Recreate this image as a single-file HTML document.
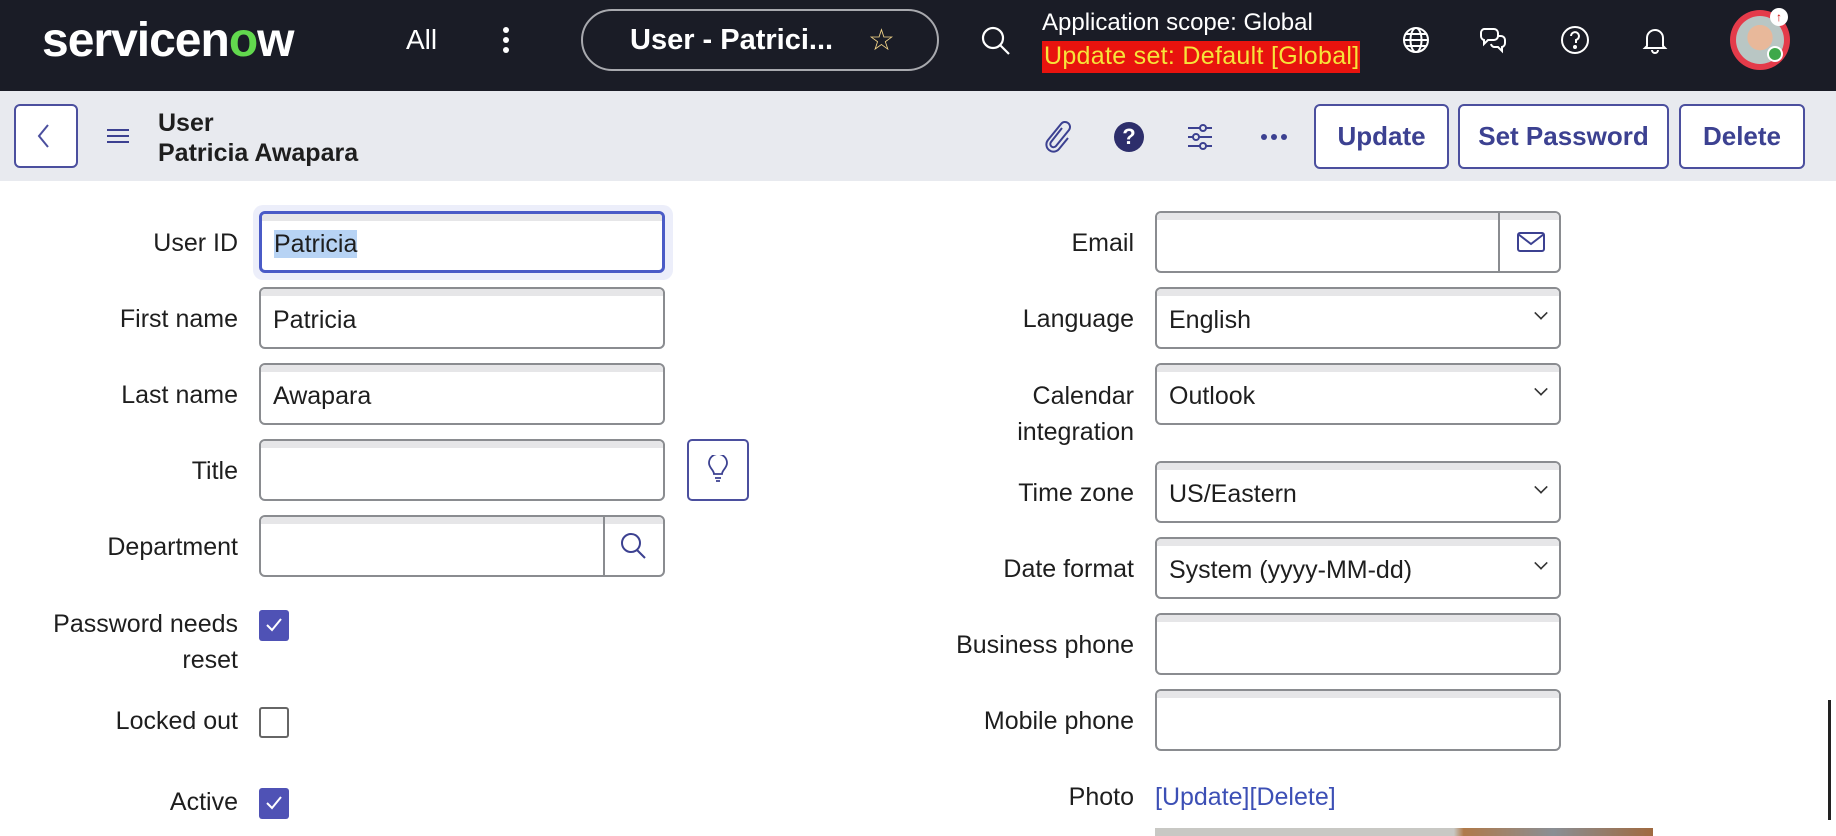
<!DOCTYPE html>
<html><head><meta charset="utf-8"><style>
*{box-sizing:border-box;margin:0;padding:0}
body{width:1836px;height:836px;overflow:hidden;background:#fff;font-family:"Liberation Sans",sans-serif;position:relative;color:#1e1e1e}
.a{position:absolute}
.top{left:0;top:0;width:1836px;height:91px;background:#1a1c26}
.bar2{left:0;top:91px;width:1836px;height:90px;background:#e8eaef}
.lbl{position:absolute;font-size:25px;text-align:right;white-space:nowrap;line-height:35px}
.inp{position:absolute;height:62px;border:2px solid #8a8c90;border-radius:6px;background:#fff;overflow:hidden;font-size:25px;line-height:62px;padding-left:12px}
.inp:before{content:"";position:absolute;left:0;right:0;top:0;height:7px;background:#e6e6e8}
.inp span{position:relative}
.chev{position:absolute;right:12px;top:18px;width:12px;height:12px;border-right:2px solid #333;border-bottom:2px solid #333;transform:rotate(45deg) scale(.8)}
.btn{position:absolute;top:104px;height:65px;border:2px solid #4b4f9e;border-radius:6px;background:#fff;color:#3c4191;font-weight:bold;font-size:26px;text-align:center;line-height:61px}
.cb{position:absolute;width:30px;height:31px;border-radius:3px}
.cb.on{background:#4f52b5}
.cb.off{border:2px solid #666;background:#fff}
</style></head><body>
<div class="a top"></div>
<div class="a" style="left:42px;top:13px;color:#fff;font-size:48px;font-weight:bold;letter-spacing:-1px">servicen<span style="color:#62d84e">o</span>w</div>
<div class="a" style="left:406px;top:24px;color:#fff;font-size:28px">All</div>
<svg class="a" style="left:500px;top:26px" width="12" height="30"><circle cx="6" cy="4" r="3" fill="#fff"/><circle cx="6" cy="14" r="3" fill="#fff"/><circle cx="6" cy="24" r="3" fill="#fff"/></svg>
<div class="a" style="left:581px;top:9px;width:358px;height:62px;border:2px solid #a8a9ae;border-radius:31px"></div>
<div class="a" style="left:630px;top:24px;color:#fff;font-size:29px;font-weight:bold">User - Patrici...</div>
<div class="a" style="left:868px;top:23px;color:#f5d68a;font-size:30px">☆</div>
<svg class="a" style="left:980px;top:25px" width="32" height="32" fill="none" stroke="#fff" stroke-width="2.2"><circle cx="13" cy="13" r="10"/><path d="M20 20l9 9"/></svg>
<div class="a" style="left:1042px;top:9px;color:#fff;font-size:24px">Application scope: Global</div>
<div class="a" style="left:1042px;top:41px;width:318px;height:32px;background:#e8130e"></div>
<div class="a" style="left:1044px;top:42px;color:#f6e43a;font-size:25px;letter-spacing:0.3px">Update set: Default [Global]</div>
<svg class="a" style="left:1401px;top:25px" width="30" height="30" fill="none" stroke="#fff" stroke-width="2"><circle cx="15" cy="15" r="12"/><ellipse cx="15" cy="15" rx="5.5" ry="12"/><path d="M3 15h24M5 9h20M5 21h20"/></svg>
<svg class="a" style="left:1479px;top:25px" width="30" height="30" fill="none" stroke="#fff" stroke-width="2"><path d="M5 4h10a4 4 0 0 1 4 4v3a4 4 0 0 1-4 4H9l-4 4v-4a4 4 0 0 1-3-4V8a4 4 0 0 1 3-4z"/><path d="M19 11h3a4 4 0 0 1 4 4v3a4 4 0 0 1-3 4v4l-4-4h-4a4 4 0 0 1-3-3"/></svg>
<svg class="a" style="left:1559px;top:24px" width="32" height="32" fill="none" stroke="#fff" stroke-width="2"><circle cx="16" cy="16" r="13"/><path d="M12 12a4 4 0 1 1 5 4v3"/><circle cx="16" cy="23" r="1" fill="#fff"/></svg>
<svg class="a" style="left:1641px;top:25px" width="28" height="30" fill="none" stroke="#fff" stroke-width="2"><path d="M6 21V13a8 8 0 0 1 16 0v8l2 2H4z"/><path d="M11 25a3 3 0 0 0 6 0"/></svg>
<div class="a" style="left:1730px;top:10px;width:60px;height:60px;border-radius:50%;background:#e43b4a"></div>
<div class="a" style="left:1736px;top:16px;width:48px;height:48px;border-radius:50%;background:radial-gradient(circle at 50% 45%,#e8b89a 0 35%,#b9c6c4 36%)"></div>
<div class="a" style="left:1767px;top:46px;width:16px;height:16px;border-radius:50%;background:#3ea84a;border:2px solid #fff"></div>
<div class="a" style="left:1770px;top:8px;width:18px;height:18px;border-radius:50%;background:#fff;color:#c00;font-size:12px;text-align:center;line-height:18px">↑</div>

<div class="a bar2"></div>
<div class="a" style="left:14px;top:104px;width:64px;height:64px;border:2px solid #4b4f9e;border-radius:6px;background:#fff"></div>
<svg class="a" style="left:34px;top:122px" width="20" height="28" fill="none" stroke="#4b4f9e" stroke-width="2"><path d="M14 3L5 14l9 11"/></svg>
<svg class="a" style="left:107px;top:128px" width="22" height="16" stroke="#3c4191" stroke-width="2"><path d="M0 2h22M0 8h22M0 14h22"/></svg>
<div class="a" style="left:158px;top:108px;font-size:25px;font-weight:bold;line-height:30px">User<br>Patricia Awapara</div>
<svg class="a" style="left:1042px;top:120px" width="30" height="34" fill="none" stroke="#3c4191" stroke-width="2"><path d="M20 8L9 22a3 3 0 0 0 5 4l13-16a5 5 0 0 0-8-6L6 20a7 7 0 0 0 11 9l9-11"/></svg>
<div class="a" style="left:1114px;top:122px;width:30px;height:30px;border-radius:50%;background:#2d2e6b;color:#fff;font-weight:bold;font-size:22px;text-align:center;line-height:30px">?</div>
<svg class="a" style="left:1186px;top:122px" width="28" height="30" fill="none" stroke="#3c4191" stroke-width="2"><path d="M2 6h24M2 15h24M2 24h24"/><circle cx="17" cy="6" r="3" fill="#e8eaef"/><circle cx="10" cy="15" r="3" fill="#e8eaef"/><circle cx="17" cy="24" r="3" fill="#e8eaef"/></svg>
<svg class="a" style="left:1260px;top:132px" width="28" height="10" fill="#3c4191"><circle cx="4" cy="5" r="3"/><circle cx="14" cy="5" r="3"/><circle cx="24" cy="5" r="3"/></svg>
<div class="btn" style="left:1314px;width:135px">Update</div>
<div class="btn" style="left:1458px;width:211px">Set Password</div>
<div class="btn" style="left:1679px;width:126px">Delete</div>

<!-- left column -->
<div class="lbl" style="right:1598px;top:226px">User ID</div>
<div class="a" style="left:253px;top:205px;width:420px;height:75px;border-radius:10px;background:#eceefa"></div>
<div class="inp" style="left:259px;top:211px;width:406px;border:3px solid #4a5bc7;line-height:60px"><span style="background:#b7d3f4">Patricia</span></div>
<div class="lbl" style="right:1598px;top:302px">First name</div>
<div class="inp" style="left:259px;top:287px;width:406px"><span>Patricia</span></div>
<div class="lbl" style="right:1598px;top:378px">Last name</div>
<div class="inp" style="left:259px;top:363px;width:406px"><span>Awapara</span></div>
<div class="lbl" style="right:1598px;top:454px">Title</div>
<div class="inp" style="left:259px;top:439px;width:406px"></div>
<div class="a" style="left:687px;top:439px;width:62px;height:62px;border:2px solid #4b4f9e;border-radius:5px"></div>
<svg class="a" style="left:707px;top:455px" width="22" height="30" fill="none" stroke="#3c4191" stroke-width="1.8"><path d="M7 19c0-4-5-6-5-11a9 9 0 0 1 18 0c0 5-5 7-5 11z"/><path d="M8 23h6M9 26h4"/></svg>
<div class="lbl" style="right:1598px;top:530px">Department</div>
<div class="inp" style="left:259px;top:515px;width:406px"></div>
<div class="a" style="left:603px;top:517px;width:2px;height:58px;background:#8a8c90"></div>
<svg class="a" style="left:619px;top:531px" width="30" height="30" fill="none" stroke="#3c4191" stroke-width="2"><circle cx="12" cy="12" r="9"/><path d="M18 19l8 8"/></svg>
<div class="lbl" style="right:1598px;top:606px;line-height:36px">Password needs<br>reset</div>
<div class="cb on" style="left:259px;top:610px"></div>
<svg class="a" style="left:265px;top:617px" width="18" height="16" fill="none" stroke="#fff" stroke-width="2"><path d="M2 8l5 5 9-11"/></svg>
<div class="lbl" style="right:1598px;top:704px">Locked out</div>
<div class="cb off" style="left:259px;top:707px"></div>
<div class="lbl" style="right:1598px;top:785px">Active</div>
<div class="cb on" style="left:259px;top:788px"></div>
<svg class="a" style="left:265px;top:795px" width="18" height="16" fill="none" stroke="#fff" stroke-width="2"><path d="M2 8l5 5 9-11"/></svg>

<!-- right column -->
<div class="lbl" style="right:702px;top:226px">Email</div>
<div class="inp" style="left:1155px;top:211px;width:406px"></div>
<div class="a" style="left:1498px;top:213px;width:2px;height:58px;background:#8a8c90"></div>
<svg class="a" style="left:1517px;top:232px" width="28" height="20" fill="none" stroke="#3c4191" stroke-width="2"><rect x="1" y="1" width="26" height="18" rx="2"/><path d="M1 2l13 10 13-10"/></svg>
<div class="lbl" style="right:702px;top:302px">Language</div>
<div class="inp" style="left:1155px;top:287px;width:406px"><span>English</span><i class="chev"></i></div>
<div class="lbl" style="right:702px;top:378px;line-height:36px">Calendar<br>integration</div>
<div class="inp" style="left:1155px;top:363px;width:406px"><span>Outlook</span><i class="chev"></i></div>
<div class="lbl" style="right:702px;top:476px">Time zone</div>
<div class="inp" style="left:1155px;top:461px;width:406px"><span>US/Eastern</span><i class="chev"></i></div>
<div class="lbl" style="right:702px;top:552px">Date format</div>
<div class="inp" style="left:1155px;top:537px;width:406px"><span>System (yyyy-MM-dd)</span><i class="chev"></i></div>
<div class="lbl" style="right:702px;top:628px">Business phone</div>
<div class="inp" style="left:1155px;top:613px;width:406px"></div>
<div class="lbl" style="right:702px;top:704px">Mobile phone</div>
<div class="inp" style="left:1155px;top:689px;width:406px"></div>
<div class="lbl" style="right:702px;top:780px">Photo</div>
<div class="a" style="left:1155px;top:780px;font-size:25px;line-height:35px;color:#3c4fb5">[Update][Delete]</div>
<div class="a" style="left:1155px;top:828px;width:498px;height:8px;background:linear-gradient(90deg,#c8c8c4 0 60%,#b07a4a 62%,#8a8e94 80%,#a06a40)"></div>
<div class="a" style="left:1828px;top:700px;width:3px;height:120px;background:#222"></div>
</body></html>
